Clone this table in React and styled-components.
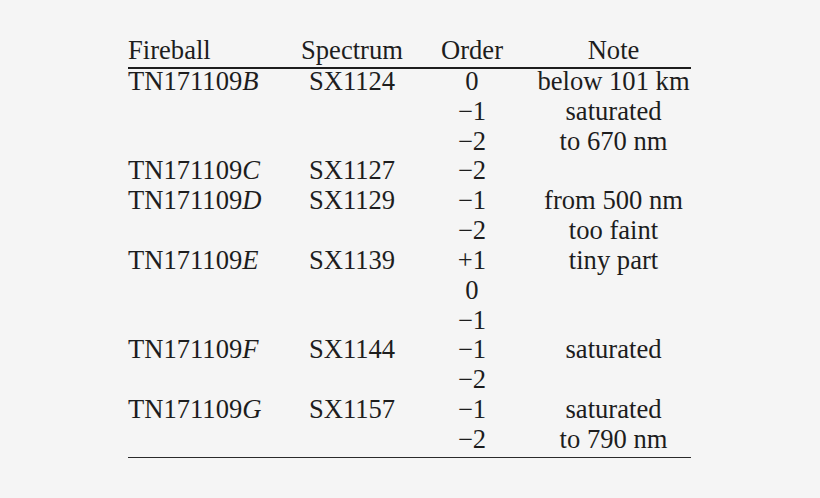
import React from 'react';
import styled, { createGlobalStyle } from 'styled-components';

const GlobalStyle = createGlobalStyle`
  html, body {
    margin: 0;
    padding: 0;
    background-color: #f5f5f5;
  }
`;

const Page = styled.div`
  width: 820px;
  height: 498px;
  padding-top: 37px;
  box-sizing: border-box;
  background-color: #f5f5f5;
  font-family: "Liberation Serif", "Times New Roman", serif;
  font-size: 26.6px;
  color: #1d1d1d;
`;

const Table = styled.div`
  width: 563px;
  margin-left: 128px;
  border-bottom: 1px solid #2a2a2a;
`;

const Row = styled.div`
  display: grid;
  grid-template-columns: 168px 112px 128px 155px;
  height: 29.83px;
  line-height: 24px;
  white-space: nowrap;
`;

const HeadRow = styled(Row)`
  height: 29px;
  padding-top: 1px;
  border-bottom: 2px solid #1d1d1d;
`;

const Cell = styled.div`
  text-align: ${(p) => (p.$left ? 'left' : 'center')};
`;

const Suffix = styled.i`
  font-style: italic;
`;

const rows = [
  ['B', 'SX1124', '0', 'below 101 km'],
  ['', '', '\u22121', 'saturated'],
  ['', '', '\u22122', 'to 670 nm'],
  ['C', 'SX1127', '\u22122', ''],
  ['D', 'SX1129', '\u22121', 'from 500 nm'],
  ['', '', '\u22122', 'too faint'],
  ['E', 'SX1139', '+1', 'tiny part'],
  ['', '', '0', ''],
  ['', '', '\u22121', ''],
  ['F', 'SX1144', '\u22121', 'saturated'],
  ['', '', '\u22122', ''],
  ['G', 'SX1157', '\u22121', 'saturated'],
  ['', '', '\u22122', 'to 790 nm'],
];

const App = () => {
  return (
    <Page>
      <GlobalStyle />
      <Table>
        <HeadRow>
          <Cell $left>Fireball</Cell>
          <Cell>Spectrum</Cell>
          <Cell>Order</Cell>
          <Cell>Note</Cell>
        </HeadRow>
        {rows.map(([fb, spec, order, note], i) => (
          <Row key={i}>
            <Cell $left>
              {fb && (
                <>
                  TN171109<Suffix>{fb}</Suffix>
                </>
              )}
            </Cell>
            <Cell>{spec}</Cell>
            <Cell>{order}</Cell>
            <Cell>{note}</Cell>
          </Row>
        ))}
      </Table>
    </Page>
  );
};

export default App;
